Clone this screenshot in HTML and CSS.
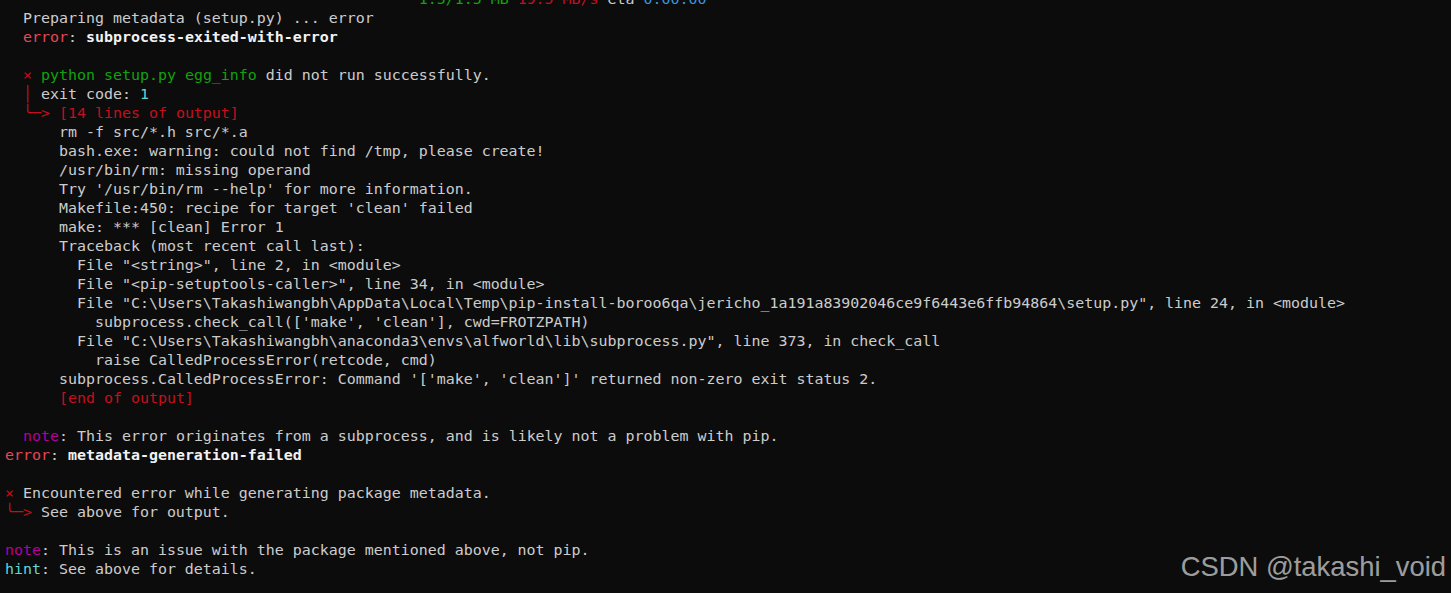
FILE: index.html
```html
<!DOCTYPE html>
<html>
<head>
<meta charset="utf-8">
<link rel="stylesheet" href="styles.css">
</head>
<body>
<div class="term">
<pre class="out"><span class="g">                                              </span><span class="g">1.5/1.5 MB</span> <span class="r">19.5 MB/s</span> eta <span class="c">0:00:00</span>
  Preparing metadata (setup.py) ... error
  <span class="br">error</span>: <span class="b">subprocess-exited-with-error</span>

  <span class="r">×</span> <span class="g">python setup.py egg_info</span> did not run successfully.
  <span class="r">│</span> exit code: <span class="bc">1</span>
  <span class="r">╰─&gt; [14 lines of output]</span>
      rm -f src/*.h src/*.a
      bash.exe: warning: could not find /tmp, please create!
      /usr/bin/rm: missing operand
      Try '/usr/bin/rm --help' for more information.
      Makefile:450: recipe for target 'clean' failed
      make: *** [clean] Error 1
      Traceback (most recent call last):
        File "&lt;string&gt;", line 2, in &lt;module&gt;
        File "&lt;pip-setuptools-caller&gt;", line 34, in &lt;module&gt;
        File "C:\Users\Takashiwangbh\AppData\Local\Temp\pip-install-boroo6qa\jericho_1a191a83902046ce9f6443e6ffb94864\setup.py", line 24, in &lt;module&gt;
          subprocess.check_call(['make', 'clean'], cwd=FROTZPATH)
        File "C:\Users\Takashiwangbh\anaconda3\envs\alfworld\lib\subprocess.py", line 373, in check_call
          raise CalledProcessError(retcode, cmd)
      subprocess.CalledProcessError: Command '['make', 'clean']' returned non-zero exit status 2.
      <span class="r">[end of output]</span>

  <span class="m">note</span>: This error originates from a subprocess, and is likely not a problem with pip.
<span class="br">error</span>: <span class="b">metadata-generation-failed</span>

<span class="r">×</span> Encountered error while generating package metadata.
<span class="r">╰─&gt;</span> See above for output.

<span class="m">note</span>: This is an issue with the package mentioned above, not pip.
<span class="bc">hint</span>: See above for details.</pre>
</div>
<div class="watermark">CSDN @takashi_void</div>
</body>
</html>
```
FILE: styles.css
```css
html, body {
  margin: 0;
  padding: 0;
  background: #0c0c0c;
  width: 1451px;
  height: 593px;
  overflow: hidden;
}
.term {
  padding-left: 5px;
  margin-top: -10px;
}
.out {
  margin: 0;
  font-family: "DejaVu Sans Mono", "Liberation Mono", monospace;
  font-size: 14.95px;
  line-height: 19px;
  color: #cccccc;
  white-space: pre;
}
.g { color: #13a10e; }
.r { color: #c50f1f; }
.br { color: #e74856; }
.c { color: #3a96dd; }
.bc { color: #61d6d6; }
.m { color: #b4009e; }
.b { color: #f2f2f2; font-weight: bold; }
.watermark {
  position: absolute;
  right: 5px;
  top: 551px;
  font-family: "Liberation Sans", Arial, sans-serif;
  font-size: 27.4px;
  line-height: 32px;
  color: rgba(255, 255, 255, 0.62);
}
```
